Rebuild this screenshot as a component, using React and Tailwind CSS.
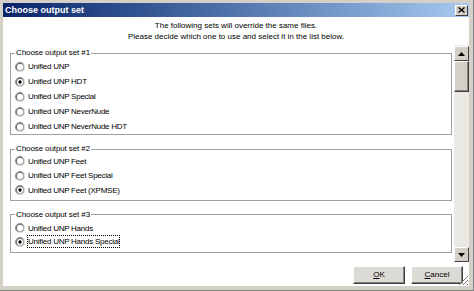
import React from "react";

const groups = [
  {
    title: "Choose output set #1",
    rowClass: "h-[15px]",
    bodyClass: "pt-[1px] pb-0",
    selected: 1,
    options: [
      "Unified UNP",
      "Unified UNP HDT",
      "Unified UNP Special",
      "Unified UNP NeverNude",
      "Unified UNP NeverNude HDT",
    ],
  },
  {
    title: "Choose output set #2",
    rowClass: "h-[14.5px]",
    bodyClass: "pt-[0px] pb-[2px]",
    selected: 2,
    options: ["Unified UNP Feet", "Unified UNP Feet Special", "Unified UNP Feet (XPMSE)"],
  },
  {
    title: "Choose output set #3",
    rowClass: "h-[13.5px]",
    bodyClass: "pt-[2px] pb-[3px]",
    selected: 1,
    focused: 1,
    options: ["Unified UNP Hands", "Unified UNP Hands Special"],
  },
];

function Radio({ checked }) {
  return (
    <svg width="10" height="10" viewBox="0 0 12 12" className="shrink-0">
      <circle cx="6" cy="6" r="5.5" fill="#fff" stroke="#808080" />
      <path d="M9.9 2.1 A5.5 5.5 0 0 1 2.1 9.9" fill="none" stroke="#ffffff" />
      <circle cx="6" cy="6" r="4.5" fill="#fff" stroke="#404040" />
      <path d="M9.2 2.8 A4.5 4.5 0 0 1 2.8 9.2" fill="none" stroke="#d4d0c8" />
      {checked && <circle cx="6" cy="6" r="2" fill="#000" />}
    </svg>
  );
}

function OptionGroup({ group }) {
  return (
    <fieldset className="border border-[#a0a0a0] px-[4px] mt-[9px] first:mt-[3px]">
      <legend className="px-[1px] leading-[10px] text-[#000] tracking-[-0.1px]">{group.title}</legend>
      <div className={group.bodyClass}>
        {group.options.map((opt, i) => (
          <div key={opt} className={`flex items-center gap-[2px] ${group.rowClass}`}>
            <Radio checked={i === group.selected} />
            <span
              className={
                i === group.focused
                  ? "border border-dotted border-black leading-[11px] tracking-[-0.25px]"
                  : "px-[1px] leading-[11px] tracking-[-0.25px]"
              }
            >
              {opt}
            </span>
          </div>
        ))}
      </div>
    </fieldset>
  );
}

function ScrollButton({ up }) {
  return (
    <div className="h-[15px] w-[15px] bg-[#d4d0c8] border border-t-white border-l-white border-r-[#404040] border-b-[#404040] flex items-center justify-center">
      <svg width="7" height="4" viewBox="0 0 7 4">
        {up ? <path d="M3.5 0 L7 4 L0 4 Z" fill="#000" /> : <path d="M0 0 L7 0 L3.5 4 Z" fill="#000" />}
      </svg>
    </div>
  );
}

function Button({ children }) {
  return (
    <button className="w-[52px] h-[18px] bg-[#dcdad5] border border-t-white border-l-white border-r-[#404040] border-b-[#404040] shadow-[inset_-1px_-1px_0_#808080] text-[8px] leading-none text-black">
      {children}
    </button>
  );
}

export default function App() {
  return (
    <div
      className="w-[474px] h-[291px] bg-[#d4d0c8] pt-[3px] pl-[3px] pr-[4px] pb-[4px] flex flex-col border-r border-b border-[#808080] text-[8px] text-black"
      style={{ fontFamily: '"Liberation Sans", Arial, sans-serif' }}
    >
      {/* Title bar */}
      <div className="h-[14px] flex items-center justify-between bg-gradient-to-r from-[#0a246a] to-[#a6caf0] pl-[2px] pr-[1px]">
        <span className="text-white font-bold text-[9px] leading-none">Choose output set</span>
        <div className="w-[13px] h-[11px] bg-[#d4d0c8] border border-t-white border-l-white border-r-[#404040] border-b-[#404040] flex items-center justify-center">
          <svg width="7" height="6" viewBox="0 0 7 6">
            <path d="M0.5 0.5 L6.5 5.5 M6.5 0.5 L0.5 5.5" stroke="#000" strokeWidth="1.4" />
          </svg>
        </div>
      </div>

      <div className="flex-1 flex flex-col bg-white min-h-0">
        {/* Header */}
        <div className="h-[28px] pt-[3px] text-center leading-[11px]">
          <p>The following sets will override the same files.</p>
          <p>Please decide which one to use and select it in the list below.</p>
        </div>

        {/* Scroll area */}
        <div className="h-[217px] flex">
          <div className="flex-1 overflow-hidden pl-[7px] pr-[2px] flex flex-col">
            {groups.map((g) => (
              <OptionGroup key={g.title} group={g} />
            ))}
          </div>
          <div className="w-[15px] flex flex-col pt-[1px] bg-[#ebe9e4]">
            <ScrollButton up />
            <div className="h-[31px] bg-[#d4d0c8] border border-t-white border-l-white border-r-[#404040] border-b-[#404040] shadow-[inset_-1px_-1px_0_#808080]" />
            <div className="flex-1" />
            <ScrollButton />
          </div>
        </div>

        {/* Footer */}
        <div className="flex-1 flex justify-end items-start gap-[6px] pt-[4px] pr-[6px] relative">
          <Button>
            <span className="underline">O</span>K
          </Button>
          <Button>
            <span className="underline">C</span>ancel
          </Button>
          <svg width="11" height="11" viewBox="0 0 11 11" className="absolute right-0 bottom-0">
            <path d="M10 1 L1 10 M10 5 L5 10 M10 9 L9 10" stroke="#808080" strokeWidth="1" />
            <path d="M10.5 2 L2 10.5 M10.5 6 L6 10.5" stroke="#fff" strokeWidth="1" />
          </svg>
        </div>
      </div>
    </div>
  );
}
